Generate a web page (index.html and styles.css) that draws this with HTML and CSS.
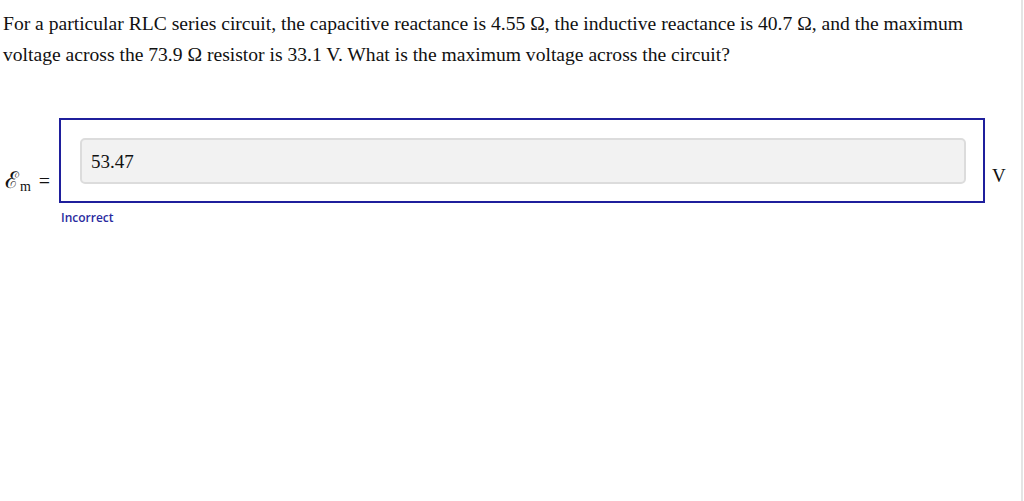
FILE: index.html
```html
<!DOCTYPE html>
<html>
<head>
<meta charset="utf-8">
<link rel="stylesheet" href="styles.css">
</head>
<body>
<div class="page">
  <p class="question">For a particular RLC series circuit, the capacitive reactance is 4.55 Ω, the inductive reactance is 40.7 Ω, and the maximum<br>voltage across the 73.9 Ω resistor is 33.1 V. What is the maximum voltage across the circuit?</p>
  <div class="answer-row">
    <div class="label"><span class="emf">ℰ</span><span class="sub">m</span> <span class="eq">=</span></div>
    <div class="box">
      <div class="input">53.47</div>
    </div>
    <div class="unit">V</div>
  </div>
  <div class="feedback">Incorrect</div>
</div>
</body>
</html>
```

FILE: styles.css
```css
html, body {
  margin: 0;
  padding: 0;
  background: #ffffff;
}
body {
  width: 1024px;
  height: 501px;
  overflow: hidden;
  position: relative;
}
body::after {
  content: "";
  position: absolute;
  top: 0;
  right: 1px;
  width: 2px;
  height: 100%;
  background: #e4e4e4;
}
.page {
  font-family: "Liberation Serif", "Times New Roman", serif;
  color: #111;
}
.question {
  margin: 0;
  padding: 8px 0 0 3px;
  font-size: 19.6px;
  line-height: 31px;
  width: 1010px;
  white-space: nowrap;
}
.answer-row {
  display: flex;
  align-items: flex-start;
  margin-top: 48px;
}
.label {
  width: 59px;
  box-sizing: border-box;
  padding: 45px 0 0 5px;
  font-size: 19px;
  white-space: nowrap;
}
.emf {
  font-family: "DejaVu Serif", serif;
  font-size: 23px;
}
.sub {
  font-size: 14px;
  position: relative;
  top: 3px;
  margin-left: 1px;
}
.eq {
  margin-left: 3px;
  font-size: 20px;
}
.box {
  width: 926px;
  height: 85px;
  box-sizing: border-box;
  border: 2px solid #1f1f9c;
  padding: 18px 17px 17px 19px;
}
.input {
  height: 46px;
  box-sizing: border-box;
  background: #f2f2f2;
  border: 2px solid #dcdcdc;
  border-radius: 5px;
  font-size: 19px;
  padding: 11px 0 0 9px;
  line-height: 22px;
}
.unit {
  padding: 47px 0 0 7px;
  font-size: 19px;
}
.feedback {
  margin: 6px 0 0 61px;
  font-family: "Open Sans", sans-serif;
  font-weight: 600;
  font-size: 12px;
  color: #2a2a9e;
}
```
